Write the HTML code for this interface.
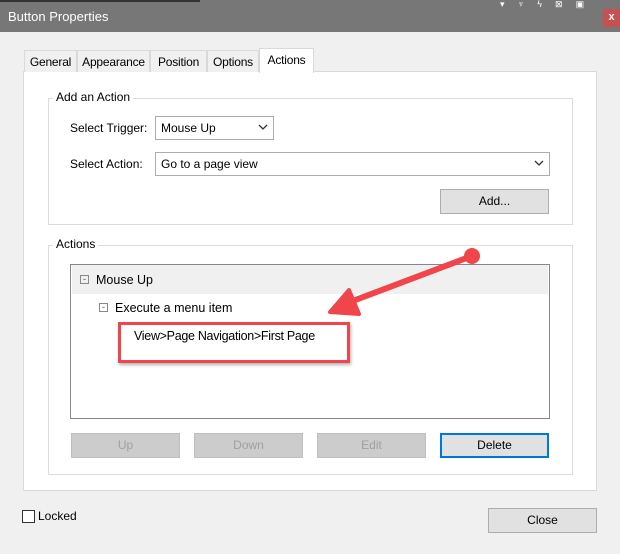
<!DOCTYPE html>
<html><head><style>
*{box-sizing:border-box}
body{margin:0;width:620px;height:554px;background:#f0f0f0;font-family:"Liberation Sans",sans-serif;font-size:12px;color:#000;position:relative;overflow:hidden}
.a{position:absolute}
.tb{left:0;top:0;width:620px;height:32px;background:#777}
.tab{position:absolute;top:50px;height:22px;border:1px solid #d9d9d9;border-bottom:none;background:#f0f0f0;padding:4px 0 0;text-align:center;letter-spacing:-0.2px}
.grp{position:absolute;border:1px solid #dcdcdc}
.lg{position:absolute;top:-9px;left:8px;background:#fff;padding:0 3px}
.btn{position:absolute;height:25px;border:1px solid #adadad;background:#e1e1e1;text-align:center;line-height:23px}
.dis{color:#a0a0a0;border-color:#bfbfbf;background:#ccc}
.dd{position:absolute;height:24px;border:1px solid #adadad;background:#fff;padding:4px 5px}
.chev{position:absolute;right:5px;top:6px}
</style></head><body>
<div class="a tb"></div>
<div class="a" style="left:0;top:0;width:200px;height:2px;background:#333"></div>
<div class="a" style="left:8px;top:9px;color:#fff;font-size:13px">Button Properties</div>
<div class="a" style="left:603px;top:9px;width:17px;height:18px;background:#c75050;color:#fff;font-size:11px;font-weight:bold;text-align:center;line-height:17px">x</div>
<div class="a" style="left:500px;top:-1px;color:#fff;font-size:9px;letter-spacing:13px">▾♆ϟ⊠▣</div>
<div class="a" style="left:23px;top:71px;width:574px;height:420px;background:#fff;border:1px solid #d9d9d9"></div>
<div class="tab" style="left:24px;width:53px">General</div>
<div class="tab" style="left:77px;width:73px">Appearance</div>
<div class="tab" style="left:150px;width:57px">Position</div>
<div class="tab" style="left:207px;width:52px">Options</div>
<div class="tab" style="left:259px;top:48px;height:25px;width:55px;background:#fff;padding-top:4px">Actions</div>
<div class="grp" style="left:48px;top:98px;width:525px;height:127px"><span class="lg" style="left:4px">Add an Action</span></div>
<div class="a" style="left:70px;top:121px">Select Trigger:</div>
<div class="dd" style="left:155px;top:116px;width:119px">Mouse Up<svg class="chev" width="10" height="8"><path d="M1 2l4 4 4-4" fill="none" stroke="#333" stroke-width="1.3"/></svg></div>
<div class="a" style="left:70px;top:157px">Select Action:</div>
<div class="dd" style="left:155px;top:152px;width:395px">Go to a page view<svg class="chev" width="10" height="8"><path d="M1 2l4 4 4-4" fill="none" stroke="#333" stroke-width="1.3"/></svg></div>
<div class="btn" style="left:440px;top:189px;width:109px">Add...</div>
<div class="grp" style="left:48px;top:245px;width:525px;height:230px"><span class="lg" style="left:4px">Actions</span></div>
<div class="a" style="left:70px;top:264px;width:480px;height:155px;background:#fff;border:1px solid #828790"></div>
<div class="a" style="left:72px;top:265px;width:476px;height:29px;background:#f0f0f0"></div>
<div class="a" style="left:80px;top:275px;width:9px;height:9px;border:1px solid #888;font-size:9px;line-height:6px;text-align:center;color:#444">-</div>
<div class="a" style="left:96px;top:273px;font-size:12.5px">Mouse Up</div>
<div class="a" style="left:99px;top:303px;width:9px;height:9px;border:1px solid #888;font-size:9px;line-height:6px;text-align:center;color:#444">-</div>
<div class="a" style="left:115px;top:301px;font-size:12.5px">Execute a menu item</div>
<div class="a" style="left:134px;top:329px;font-size:12.5px;letter-spacing:-0.3px">View&gt;Page Navigation&gt;First Page</div>
<div class="a" style="left:118px;top:322px;width:232px;height:41px;border:3px solid #f0454a;box-shadow:1px 2px 3px rgba(0,0,0,.3)"></div>
<svg class="a" style="left:0;top:0" width="620" height="554"><line x1="472" y1="256" x2="350" y2="302" stroke="#f0454a" stroke-width="6" stroke-linecap="round"/><circle cx="472" cy="256" r="8" fill="#f0454a"/><path d="M330 312L349 290L359 314Z" fill="#f0454a" stroke="#f0454a" stroke-width="4" stroke-linejoin="round"/></svg>
<div class="btn dis" style="left:71px;top:433px;width:109px">Up</div>
<div class="btn dis" style="left:194px;top:433px;width:109px">Down</div>
<div class="btn dis" style="left:317px;top:433px;width:109px">Edit</div>
<div class="btn" style="left:440px;top:433px;width:109px;border:2px solid #0078d7;line-height:21px">Delete</div>
<div class="a" style="left:22px;top:510px;width:13px;height:13px;border:1px solid #333;background:#fff"></div>
<div class="a" style="left:38px;top:509px">Locked</div>
<div class="btn" style="left:488px;top:508px;width:109px">Close</div>
</body></html>
